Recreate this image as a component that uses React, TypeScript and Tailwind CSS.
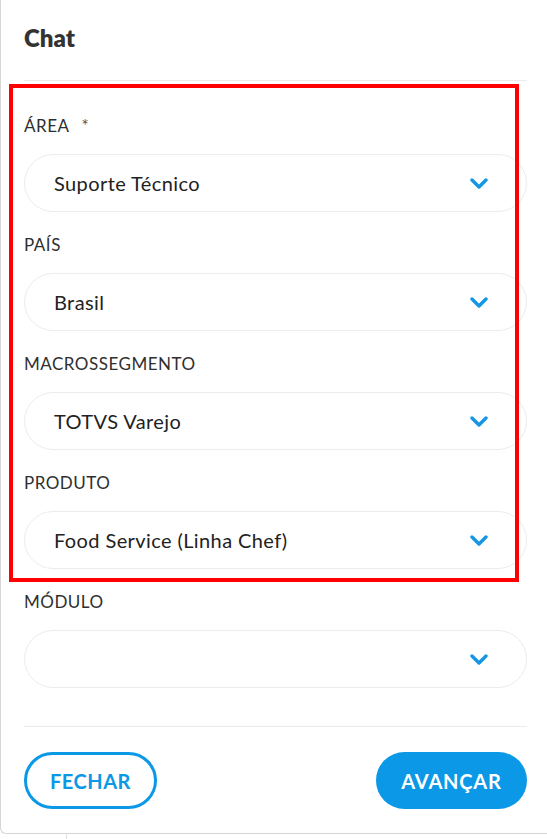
const font = { fontFamily: "Lato, 'Noto Sans', Arial, sans-serif" };

function Chevron() {
  return (
    <svg width="18" height="11" viewBox="0 0 18 11" fill="none" className="text-[#1596e4]">
      <path d="M2 2l7 7 7-7" stroke="currentColor" strokeWidth="3.4" strokeLinecap="round" strokeLinejoin="round" />
    </svg>
  );
}

function Select({ label, value, required }: { label: string; value?: string; required?: boolean }) {
  return (
    <div className="flex flex-col">
      <label className="text-[17px] leading-6 text-[#2f2f2f] tracking-[0.5px]">
        {label}
        {required && <span className="ml-3 text-[#555]">*</span>}
      </label>
      <div className="mt-4 h-[58px] rounded-full border border-[#ececec] bg-white flex items-center pl-[29px] pr-[38px]">
        <span className="flex-1 text-[20px] font-normal text-[#222] tracking-[0.4px]">{value}</span>
        <Chevron />
      </div>
    </div>
  );
}

export default function App() {
  return (
    <div className="w-full h-[839px] bg-white overflow-hidden" style={font}>
      <div className="h-[834px] border-b border-l border-[#d6d6d6] rounded-bl-[6px] pl-[23px] pr-[20px] flex flex-col">
        <h1 className="pt-[24px] pb-[28px] text-[24px] leading-7 font-extrabold text-[#333]">Chat</h1>
        <div className="border-t border-[#ebebeb]" />

        <div className="relative mt-[33px] flex flex-col gap-[21px]">
          <div className="absolute -top-[30px] -bottom-[13px] -left-[15px] right-[8px] border-4 border-[#ff0000] pointer-events-none z-10" />
          <Select label="ÁREA" value="Suporte Técnico" required />
          <Select label="PAÍS" value="Brasil" />
          <Select label="MACROSSEGMENTO" value="TOTVS Varejo" />
          <Select label="PRODUTO" value="Food Service (Linha Chef)" />
        </div>

        <div className="mt-[21px]">
          <Select label="MÓDULO" />
        </div>

        <div className="mt-[38px] border-t border-[#ebebeb]" />

        <div className="mt-[25px] flex justify-between">
          <button className="h-[57px] w-[133px] rounded-full border-[3px] border-[#0b98e6] text-[#0b98e6] text-[20px] font-bold tracking-[0.5px]">
            FECHAR
          </button>
          <button className="h-[57px] w-[151px] rounded-full bg-[#0b98e6] text-white text-[20px] font-bold tracking-[0.8px]">
            AVANÇAR
          </button>
        </div>
      </div>
      <div className="h-[5px] ml-[66px] border-l border-[#e0e0e0]" />
    </div>
  );
}
